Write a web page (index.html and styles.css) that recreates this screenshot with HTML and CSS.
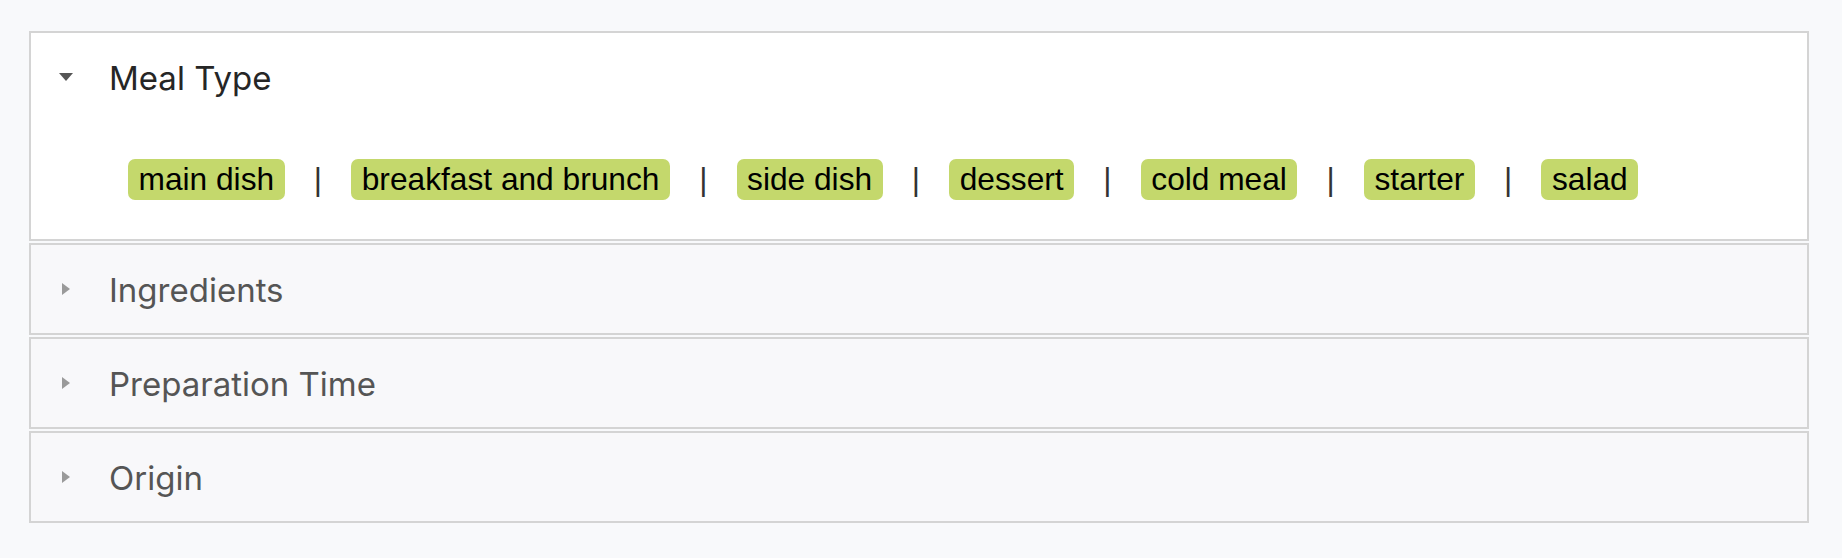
FILE: index.html
```html
<!DOCTYPE html>
<html lang="en">
<head>
    <meta charset="UTF-8">
    <title>Recipe Filters</title>
    <link rel="stylesheet" href="styles.css">
</head>
<body>
    <div class="filters">
        <div class="panel open">
            <div class="panel-header">
                <span class="caret"></span>
                <span class="panel-title">Meal Type</span>
            </div>
            <div class="panel-body">
                <span class="tag">main dish</span>
                <span class="sep">|</span>
                <span class="tag">breakfast and brunch</span>
                <span class="sep">|</span>
                <span class="tag">side dish</span>
                <span class="sep">|</span>
                <span class="tag">dessert</span>
                <span class="sep">|</span>
                <span class="tag">cold meal</span>
                <span class="sep">|</span>
                <span class="tag">starter</span>
                <span class="sep">|</span>
                <span class="tag">salad</span>
            </div>
        </div>
        <div class="panel">
            <div class="panel-header">
                <span class="caret"></span>
                <span class="panel-title">Ingredients</span>
            </div>
        </div>
        <div class="panel">
            <div class="panel-header">
                <span class="caret"></span>
                <span class="panel-title">Preparation Time</span>
            </div>
        </div>
        <div class="panel">
            <div class="panel-header">
                <span class="caret"></span>
                <span class="panel-title">Origin</span>
            </div>
        </div>
    </div>
</body>
</html>
```

FILE: styles.css
```css
body {
    margin: 0;
    background-color: #f8f9fb;
    font-family: Inter, "Liberation Sans", Arial, sans-serif;
}
.filters {
    padding: 31px 33px 0 29px;
    display: flex;
    flex-direction: column;
    gap: 2px;
}
.panel {
    border: 2px solid #d4d4d4;
    background-color: #f8f8fa;
}
.panel.open {
    background-color: #fff;
}
.panel-header {
    height: 88px;
    display: flex;
    align-items: center;
    padding-left: 27px;
}
.caret {
    width: 15px;
    height: 15px;
    display: flex;
    align-items: center;
    justify-content: center;
    margin-right: 36px;
}
.caret::before {
    content: "";
    border-style: solid;
    border-color: transparent transparent transparent #9a9a9a;
    border-width: 6px 0 6px 8px;
}
.open .caret::before {
    border-color: #555 transparent transparent transparent;
    border-width: 8px 7px 0 7px;
}
.panel-title {
    font-size: 33px;
    color: #555;
    padding-top: 2px;
}
.open .panel-title {
    color: #262626;
}
.panel-body {
    display: flex;
    align-items: center;
    gap: 29.2px;
    padding: 38px 0 39px 97px;
    font-family: "Liberation Sans", Arial, sans-serif;
    font-size: 31.7px;
}
.tag {
    background-color: #c4d86c;
    color: #000;
    border-radius: 7px;
    line-height: 41px;
    padding: 0 10.5px;
}
.sep {
    color: #333;
}
```
